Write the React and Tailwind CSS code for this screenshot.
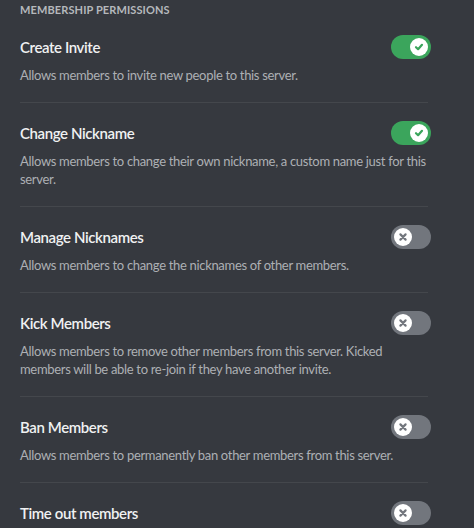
import React from "react";

const perms = [
  { title: "Create Invite", desc: "Allows members to invite new people to this server.", on: true },
  { title: "Change Nickname", desc: "Allows members to change their own nickname, a custom name just for this server.", on: true },
  { title: "Manage Nicknames", desc: "Allows members to change the nicknames of other members.", on: false },
  { title: "Kick Members", desc: "Allows members to remove other members from this server. Kicked members will be able to re-join if they have another invite.", on: false },
  { title: "Ban Members", desc: "Allows members to permanently ban other members from this server.", on: false },
  { title: "Time out members", desc: "Allows members to time out other members.", on: false },
];

function Toggle({ on }) {
  if (on) {
    return (
      <div className="w-[40px] h-[24px] rounded-full bg-[#3ba55c] flex items-center justify-end px-[3px] shrink-0">
        <div className="w-[18px] h-[18px] rounded-full bg-white flex items-center justify-center">
          <svg width="12" height="12" viewBox="0 0 12 12">
            <path d="M3 6.2 L5.1 8.2 L9 3.8" fill="none" stroke="#3ba55c" strokeWidth="2.2" strokeLinecap="round" strokeLinejoin="round" />
          </svg>
        </div>
      </div>
    );
  }
  return (
    <div className="w-[40px] h-[24px] rounded-full bg-[#72767d] flex items-center justify-start px-[3px] shrink-0">
      <div className="w-[18px] h-[18px] rounded-full bg-white flex items-center justify-center">
        <svg width="12" height="12" viewBox="0 0 12 12">
          <path d="M3.4 3.4 L8.6 8.6 M8.6 3.4 L3.4 8.6" fill="none" stroke="#72767d" strokeWidth="2.2" strokeLinecap="round" />
        </svg>
      </div>
    </div>
  );
}

export default function App() {
  return (
    <div className="w-[474px] h-[528px] overflow-hidden bg-[#36393f] pl-5" style={{ fontFamily: "Lato, 'Noto Sans', sans-serif" }}>
      <div className="w-[411px]">
        <div className="pt-[2px] text-[11px] leading-[16px] font-bold uppercase text-[#b5b8bc] tracking-[0.01em]">
          Membership Permissions
        </div>
        {perms.map((p, i) => (
          <div key={p.title}>
            {i > 0 && <div className="h-px bg-[#44474c] w-[408px]" />}
            <div className={i === 0 ? "pt-[19px] pb-[18px]" : "pt-[20px] pb-[18px]"}>
              <div className="flex items-center justify-between h-[20px]">
                <div className="text-[15px] leading-[20px] font-semibold text-[#f0f1f2] tracking-[-0.4px]">{p.title}</div>
                <Toggle on={p.on} />
              </div>
              <div className="mt-[9px] text-[13px] leading-[18px] text-[#adb0b4] tracking-[-0.32px]">{p.desc}</div>
            </div>
          </div>
        ))}
      </div>
    </div>
  );
}
